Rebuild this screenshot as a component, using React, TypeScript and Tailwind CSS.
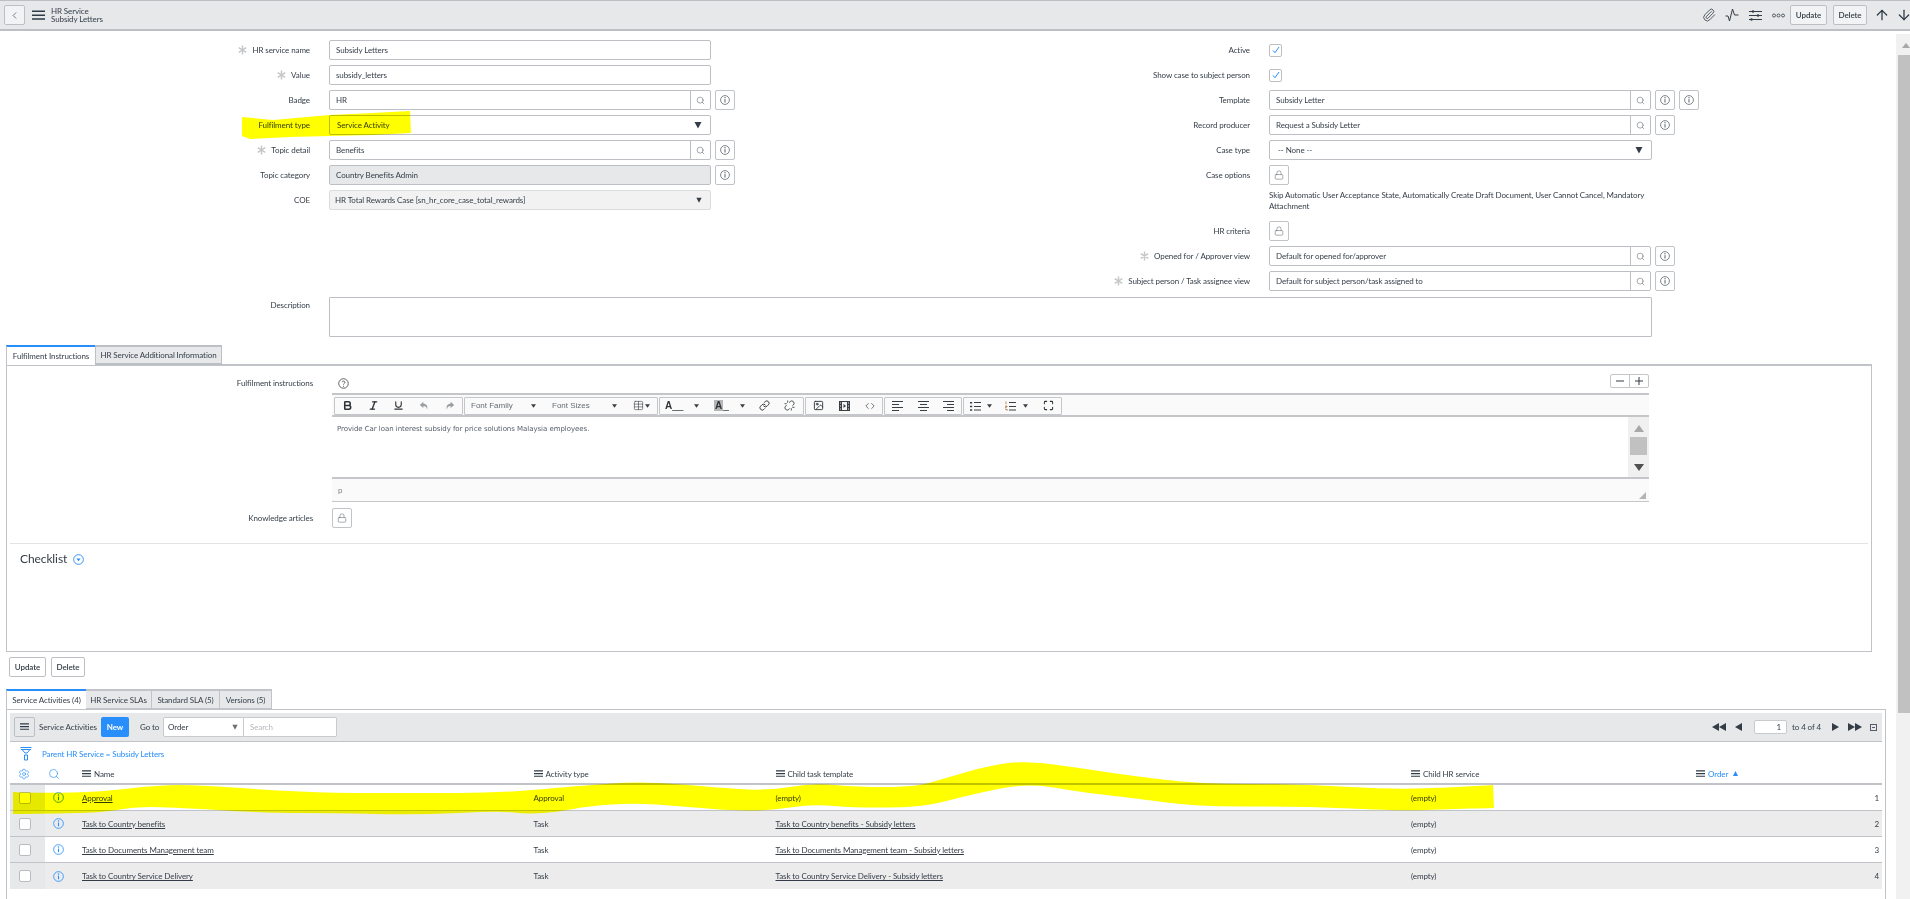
import React from 'react';
import {
  ArrowDown,
  ArrowUp,
  Bold,
  ChevronLeft,
  Code,
  Image,
  Italic,
  Link,
  Lock,
  Maximize,
  Paperclip,
  Search,
  Settings,
  Table,
  Underline,
  Unlink,
} from 'lucide-react';

const Burger = ({ w = 9 }: { w?: number }) => (
  <svg width={w} height={w * 0.8} viewBox="0 0 10 8" className="shrink-0" preserveAspectRatio="none">
    <path d="M0 1h10M0 4h10M0 7h10" stroke="#2e3a45" strokeWidth="1.2" />
  </svg>
);

const Star = () => (
  <svg width="9" height="10" viewBox="0 0 10 10" className="mr-[5px] shrink-0">
    <path d="M5 0v10M0.8 2.4l8.4 5.2M9.2 2.4l-8.4 5.2" stroke="#c4c6c8" strokeWidth="1.6" />
  </svg>
);

const InfoGlyph = ({ size = 10, color = '#555e68' }: { size?: number; color?: string }) => (
  <svg width={size} height={size} viewBox="0 0 12 12" className="shrink-0">
    <circle cx="6" cy="6" r="5.3" fill="none" stroke={color} strokeWidth="0.9" />
    <path d="M6 5v4" stroke={color} strokeWidth="1.2" />
    <circle cx="6" cy="3.2" r="0.8" fill={color} />
  </svg>
);

const Caret = ({ size = 8, color = '#343d47' }: { size?: number; color?: string }) => (
  <svg width={size} height={size} viewBox="0 0 8 8" className="shrink-0">
    <path d="M0.5 1h7L4 7.5z" fill={color} />
  </svg>
);

const TinyCaret = () => (
  <svg width="5" height="4" viewBox="0 0 6 4" className="shrink-0">
    <path d="M0 0h6L3 4z" fill="#3a3f45" />
  </svg>
);

const InfoBtn = () => (
  <button className="flex h-[20px] w-[20px] shrink-0 items-center justify-center rounded-[2px] border border-[#c0c3c7] bg-white">
    <InfoGlyph />
  </button>
);

const LockBtn = () => (
  <button className="flex h-[20px] w-[20px] shrink-0 items-center justify-center rounded-[2px] border border-[#c0c3c7] bg-white">
    <Lock size={10} strokeWidth={1.2} color="#555e68" />
  </button>
);

const Label = ({ text, star, w }: { text: string; star?: boolean; w: string }) => (
  <div className={`flex shrink-0 items-center justify-end ${w}`}>
    {star && <Star />}
    <span>{text}</span>
  </div>
);

const TextInput = ({ value, w, lookup }: { value: string; w: string; lookup?: boolean }) => (
  <div className={`flex h-[20px] shrink-0 items-center rounded-[2px] border border-[#bcc0c4] bg-white ${w}`}>
    <span className="flex-1 pl-[6px]">{value}</span>
    {lookup && (
      <span className="flex h-full w-[20px] items-center justify-center border-l border-[#bcc0c4]">
        <Search size={9} strokeWidth={1.4} color="#555e68" />
      </span>
    )}
  </div>
);

const Row = ({ children }: { children: React.ReactNode }) => (
  <div className="mb-[5px] flex h-[20px] items-center">{children}</div>
);

function LeftColumn() {
  const lbl = 'w-[310px]';
  return (
    <div className="w-[945px] shrink-0">
      <Row>
        <Label text="HR service name" star w={lbl} />
        <div className="ml-[19px] flex gap-[4px]">
          <TextInput value="Subsidy Letters" w="w-[382px]" />
        </div>
      </Row>
      <Row>
        <Label text="Value" star w={lbl} />
        <div className="ml-[19px] flex gap-[4px]">
          <TextInput value="subsidy_letters" w="w-[382px]" />
        </div>
      </Row>
      <Row>
        <Label text="Badge" w={lbl} />
        <div className="ml-[19px] flex gap-[4px]">
          <TextInput value="HR" w="w-[382px]" lookup />
          <InfoBtn />
        </div>
      </Row>
      <Row>
        <Label text="Fulfilment type" w={lbl} />
        <div className="ml-[19px] flex h-[20px] w-[382px] items-center justify-between rounded-[2px] border border-[#bcc0c4] bg-white pl-[7px] pr-[8px]">
          <span>Service Activity</span>
          <Caret />
        </div>
      </Row>
      <Row>
        <Label text="Topic detail" star w={lbl} />
        <div className="ml-[19px] flex gap-[4px]">
          <TextInput value="Benefits" w="w-[382px]" lookup />
          <InfoBtn />
        </div>
      </Row>
      <Row>
        <Label text="Topic category" w={lbl} />
        <div className="ml-[19px] flex gap-[4px]">
          <div className="flex h-[20px] w-[382px] items-center rounded-[2px] border border-[#bcc0c4] bg-[#e6e8ea] pl-[6px]">
            Country Benefits Admin
          </div>
          <InfoBtn />
        </div>
      </Row>
      <Row>
        <Label text="COE" w={lbl} />
        <div className="ml-[19px] flex h-[20px] w-[382px] items-center justify-between rounded-[2px] border border-[#d9dbdd] bg-[#f2f2f2] pl-[5px] pr-[8px]">
          <span>HR Total Rewards Case [sn_hr_core_case_total_rewards]</span>
          <Caret size={6} />
        </div>
      </Row>
    </div>
  );
}

const Check = () => (
  <div className="flex h-[13px] w-[13px] items-center justify-center rounded-[2px] border border-[#bcc0c4] bg-white">
    <svg width="8" height="8" viewBox="0 0 8 8">
      <path d="M1 4.5l2 2.2L7 1" fill="none" stroke="#278efc" strokeWidth="1" />
    </svg>
  </div>
);

function RightColumn() {
  const lbl = 'w-[305px]';
  return (
    <div className="flex-1">
      <Row>
        <Label text="Active" w={lbl} />
        <div className="ml-[19px]">
          <Check />
        </div>
      </Row>
      <Row>
        <Label text="Show case to subject person" w={lbl} />
        <div className="ml-[19px]">
          <Check />
        </div>
      </Row>
      <Row>
        <Label text="Template" w={lbl} />
        <div className="ml-[19px] flex gap-[4px]">
          <TextInput value="Subsidy Letter" w="w-[382px]" lookup />
          <InfoBtn />
          <InfoBtn />
        </div>
      </Row>
      <Row>
        <Label text="Record producer" w={lbl} />
        <div className="ml-[19px] flex gap-[4px]">
          <TextInput value="Request a Subsidy Letter" w="w-[382px]" lookup />
          <InfoBtn />
        </div>
      </Row>
      <Row>
        <Label text="Case type" w={lbl} />
        <div className="ml-[19px] flex h-[20px] w-[383px] items-center justify-between rounded-[2px] border border-[#bcc0c4] bg-white pl-[8px] pr-[8px]">
          <span>-- None --</span>
          <Caret />
        </div>
      </Row>
      <div className="flex h-[20px] items-center">
        <Label text="Case options" w={lbl} />
        <div className="ml-[19px]">
          <LockBtn />
        </div>
      </div>
      <div className="mb-[9px] ml-[324px] mt-[5px] w-[385px] leading-[11px]">
        Skip Automatic User Acceptance State, Automatically Create Draft Document, User Cannot Cancel, Mandatory Attachment
      </div>
      <Row>
        <Label text="HR criteria" w={lbl} />
        <div className="ml-[19px]">
          <LockBtn />
        </div>
      </Row>
      <Row>
        <Label text="Opened for / Approver view" star w={lbl} />
        <div className="ml-[19px] flex gap-[4px]">
          <TextInput value="Default for opened for/approver" w="w-[382px]" lookup />
          <InfoBtn />
        </div>
      </Row>
      <div className="flex h-[20px] items-center">
        <Label text="Subject person / Task assignee view" star w={lbl} />
        <div className="ml-[19px] flex gap-[4px]">
          <TextInput value="Default for subject person/task assigned to" w="w-[382px]" lookup />
          <InfoBtn />
        </div>
      </div>
    </div>
  );
}

const Group = ({ w, children }: { w: string; children: React.ReactNode }) => (
  <div className={`flex h-[18px] shrink-0 items-center rounded-[1px] border border-[#c4c6ca] ${w}`}>{children}</div>
);

const ToolBtn = ({ children, w = 'w-[25.5px]' }: { children: React.ReactNode; w?: string }) => (
  <span className={`flex shrink-0 items-center justify-center ${w}`}>{children}</span>
);

const ReplyArrow = ({ flip }: { flip?: boolean }) => (
  <svg width="10" height="10" viewBox="0 0 10 10" className={flip ? '-scale-x-100' : ''}>
    <path d="M4.4 0.8L0.8 3.9l3.6 3V5c2 0 3.2.8 3.7 3.5C9 5 7.500 2.800 4.400 2.800z" fill="#9a9ea2" />
  </svg>
);

const Film = () => (
  <svg width="11" height="10" viewBox="0 0 11 10">
    <path d="M0 0h11v10H0z" fill="#3a3f45" />
    <path d="M3 1h5v8H3z" fill="#f4f4f4" />
    <path d="M4.500 3l2.500 2-2.500 2z" fill="#3a3f45" />
    <path d="M1 2h1M1 5h1M1 8h1M9 2h1M9 5h1M9 8h1" stroke="#fff" strokeWidth="0.9" />
  </svg>
);

const AlignIcon = ({ align }: { align: 'left' | 'center' | 'right' }) => {
  const x = align === 'left' ? 0 : align === 'center' ? 2 : 4;
  return (
    <svg width="11" height="10" viewBox="0 0 11 10">
      <path d={`M0 0.500h11M${x} 3.500h7M0 6.500h11M${x} 9.500h7`} stroke="#3a3f45" strokeWidth="1" />
    </svg>
  );
};

const ListIcon = ({ num }: { num?: boolean }) => (
  <svg width="11" height="10" viewBox="0 0 11 10">
    <path d="M4 1.500h7M4 5.500h7M4 9h7" stroke="#3a3f45" strokeWidth="1" />
    {num ? (
      <path d="M1 0.500v2.500M0.200 5h1.800v1H0.400v1.500M0.400 8.500h1.800v1.200" stroke="#a36d2e" strokeWidth="0.8" fill="none" />
    ) : (
      <path d="M0 1h2.200v1.400H0zM0 4.800h2.200v1.400H0zM0 8.300h2.200v1.400H0z" fill="#3a3f45" />
    )}
  </svg>
);

function EditorToolbar() {
  const ic = '#2e3338';
  return (
    <div className="flex h-[22px] items-center gap-[1px] border-b-2 border-[#c4c6ca] bg-[#fafafa] pl-[2px] pt-[1px] font-['Liberation_Sans',sans-serif] text-[8px] tracking-normal text-[#666c74]">
      <Group w="w-[129px]">
        <ToolBtn>
          <Bold size={11} strokeWidth={3.4} color={ic} />
        </ToolBtn>
        <ToolBtn>
          <Italic size={11} strokeWidth={3} color={ic} />
        </ToolBtn>
        <ToolBtn>
          <Underline size={11} strokeWidth={2.4} color={ic} />
        </ToolBtn>
        <ToolBtn>
          <ReplyArrow />
        </ToolBtn>
        <ToolBtn>
          <ReplyArrow flip />
        </ToolBtn>
      </Group>
      <Group w="w-[194px]">
        <span className="w-[66px] pl-[6px]">Font Family</span>
        <TinyCaret />
        <span className="w-[16px]" />
        <span className="w-[60px]">Font Sizes</span>
        <TinyCaret />
        <span className="w-[16px]" />
        <Table size={11} strokeWidth={1.2} color={ic} />
        <span className="ml-[1px]">
          <TinyCaret />
        </span>
      </Group>
      <Group w="w-[145px]">
        <span className="ml-[5px] w-[25px] text-[10px] font-bold text-[#2e3338]">
          A<span className="font-normal">__</span>
        </span>
        <span className="ml-[4px]">
          <TinyCaret />
        </span>
        <span className="ml-[15px] w-[26px] text-[10px] font-bold text-[#2e3338]">
          <span className="bg-[#b4b6b8] px-[1px]">A</span>
          <span className="font-normal">_</span>
        </span>
        <TinyCaret />
        <span className="ml-[14px]">
          <Link size={11} strokeWidth={2} color={ic} />
        </span>
        <span className="ml-[14px]">
          <Unlink size={11} strokeWidth={1.8} color={ic} />
        </span>
      </Group>
      <Group w="w-[78px]">
        <ToolBtn>
          <Image size={11} strokeWidth={2} color={ic} />
        </ToolBtn>
        <ToolBtn>
          <Film />
        </ToolBtn>
        <ToolBtn>
          <Code size={10} strokeWidth={1.6} color={ic} />
        </ToolBtn>
      </Group>
      <Group w="w-[78px]">
        <ToolBtn>
          <AlignIcon align="left" />
        </ToolBtn>
        <ToolBtn>
          <AlignIcon align="center" />
        </ToolBtn>
        <ToolBtn>
          <AlignIcon align="right" />
        </ToolBtn>
      </Group>
      <Group w="w-[99px]">
        <span className="ml-[6px]">
          <ListIcon />
        </span>
        <span className="ml-[6px]">
          <TinyCaret />
        </span>
        <span className="ml-[13px]">
          <ListIcon num />
        </span>
        <span className="ml-[7px]">
          <TinyCaret />
        </span>
        <span className="ml-[15px]">
          <Maximize size={11} strokeWidth={2.2} color={ic} />
        </span>
      </Group>
    </div>
  );
}

function FormTabs() {
  return (
    <>
      <div className="ml-[6px] flex h-[20px]">
        <div className="flex w-[89px] items-center justify-center border-l border-t-[2px] border-[#278efc] border-l-[#c0c3c7] bg-white">
          Fulfilment Instructions
        </div>
        <div className="flex w-[127px] items-center justify-center border-x border-b-2 border-t-2 border-[#bcc0c4] bg-[#e6e8ea]">
          HR Service Additional Information
        </div>
      </div>
      <div className="-mt-[1px] ml-[6px] h-[288px] w-[1866px] border border-t-2 border-[#c0c3c7]">
        <div className="flex pt-[8px]">
          <div className="w-[306px] shrink-0 pt-[3px] text-right leading-[12px]">Fulfilment instructions</div>
          <div className="ml-[19px] w-[1317px]">
            <div className="flex h-[14px] items-center justify-between">
              <svg width="11" height="11" viewBox="0 0 12 12" className="ml-[6px] mt-[4px]">
                <circle cx="6" cy="6" r="5.2" fill="none" stroke="#444" strokeWidth="0.9" />
                <path d="M4.400 4.600C4.600 3 7.600 3 7.600 4.700c0 1.200-1.600 1.100-1.600 2.500" fill="none" stroke="#444" strokeWidth="0.9" />
                <circle cx="6" cy="9" r="0.6" fill="#444" />
              </svg>
              <div className="flex h-[14px] w-[39px] rounded-[2px] border border-[#c4c6ca] text-[#343d47]">
                <span className="flex flex-1 items-center justify-center border-r border-[#c4c6ca]">
                  <svg width="8" height="8" viewBox="0 0 8 8">
                    <path d="M0 4h8" stroke="#343d47" strokeWidth="1" />
                  </svg>
                </span>
                <span className="flex flex-1 items-center justify-center">
                  <svg width="8" height="8" viewBox="0 0 8 8">
                    <path d="M0 4h8M4 0v8" stroke="#343d47" strokeWidth="1" />
                  </svg>
                </span>
              </div>
            </div>
            <div className="mt-[5px] border-x-0 border-b border-t-2 border-[#c4c6ca]">
              <EditorToolbar />
              <div className="flex h-[62px] border-b-2 border-[#c4c6ca]">
                <div className="flex-1 pl-[5px] pt-[5px] font-['DejaVu_Sans',sans-serif] text-[7px] leading-[14px] tracking-[-0.05px] text-[#555e68]">
                  Provide Car loan interest subsidy for price solutions Malaysia employees.
                </div>
                <div className="flex w-[21px] flex-col items-center bg-[#f0f0f0] pt-[8px]">
                  <svg width="10" height="7" viewBox="0 0 10 7">
                    <path d="M5 0l5 7H0z" fill="#a8a8a8" />
                  </svg>
                  <div className="mt-[5px] h-[18px] w-[17px] bg-[#c1c1c1]" />
                  <svg width="10" height="7" viewBox="0 0 10 7" className="mt-[9px]">
                    <path d="M0 0h10L5 7z" fill="#505050" />
                  </svg>
                </div>
              </div>
              <div className="flex h-[22px] items-center justify-between bg-[#fafafa] pl-[6px] pr-[3px] text-[#808488]">
                <span>p</span>
                <svg width="7" height="7" viewBox="0 0 7 7" className="mt-[10px]">
                  <path d="M7 0v7H0z" fill="#b4b4b4" />
                </svg>
              </div>
            </div>
          </div>
        </div>
        <div className="mt-[6px] flex h-[20px] items-center">
          <div className="w-[306px] shrink-0 text-right">Knowledge articles</div>
          <div className="ml-[19px]">
            <LockBtn />
          </div>
        </div>
        <div className="mx-[3px] mt-[15px] border-t border-[#e2e3e5]" />
        <div className="ml-[13px] mt-[8px] flex items-center">
          <span className="text-[12px] leading-[14px]">Checklist</span>
          <svg width="11" height="11" viewBox="0 0 12 12" className="ml-[6px]">
            <circle cx="6" cy="6" r="5.300" fill="none" stroke="#278efc" strokeWidth="1" />
            <path d="M3.800 5h4.400L6 8z" fill="#278efc" />
          </svg>
        </div>
      </div>
    </>
  );
}

const PagerTri = ({ dir }: { dir: 'l' | 'r' }) => (
  <svg width="7" height="8" viewBox="0 0 7 8">
    <path d={dir === 'l' ? 'M7 0v8L0 4z' : 'M0 0v8l7-4z'} fill="#343d47" />
  </svg>
);

function ListToolbar() {
  return (
    <div className="flex h-[29px] items-center border-b border-[#c0c3c7] bg-[#e6e8ea] pl-[4px]">
      <button className="flex h-[20px] w-[21px] items-center justify-center rounded-[2px] border border-[#bcc0c4]">
        <Burger />
      </button>
      <span className="ml-[4px] w-[62px]">Service Activities</span>
      <button className="flex h-[20px] w-[28px] items-center justify-center rounded-[2px] bg-[#278efc] font-bold text-white">
        New
      </button>
      <span className="ml-[11px] w-[23px]">Go to</span>
      <div className="flex h-[20px] w-[81px] items-center justify-between rounded-l-[2px] border border-[#c8cacc] bg-white pl-[4px] pr-[5px]">
        <span>Order</span>
        <Caret size={6} color="#6a6f75" />
      </div>
      <div className="flex h-[20px] w-[93px] items-center rounded-r-[2px] border border-l-0 border-[#c8cacc] bg-white pl-[6px] text-[#b4b8bc]">
        Search
      </div>
      <div className="ml-auto flex items-center pr-[5px]">
        <PagerTri dir="l" />
        <PagerTri dir="l" />
        <span className="ml-[9px]">
          <PagerTri dir="l" />
        </span>
        <div className="ml-[12px] flex h-[14px] w-[33px] items-center justify-end rounded-[2px] border border-[#c8cacc] bg-white pr-[5px]">
          1
        </div>
        <span className="ml-[5px] w-[40px]">to 4 of 4</span>
        <PagerTri dir="r" />
        <span className="ml-[9px] flex">
          <PagerTri dir="r" />
          <PagerTri dir="r" />
        </span>
        <span className="ml-[8px] flex h-[7px] w-[7px] items-center justify-center border border-[#555e68]">
          <span className="h-[1px] w-[3px] bg-[#555e68]" />
        </span>
      </div>
    </div>
  );
}

const rows = [
  { name: 'Approval', type: 'Approval', tmpl: '', order: 1 },
  { name: 'Task to Country benefits', type: 'Task', tmpl: 'Task to Country benefits - Subsidy letters', order: 2 },
  { name: 'Task to Documents Management team', type: 'Task', tmpl: 'Task to Documents Management team - Subsidy letters', order: 3 },
  { name: 'Task to Country Service Delivery', type: 'Task', tmpl: 'Task to Country Service Delivery - Subsidy letters', order: 4 },
];

const ColHead = ({ text, w, blue }: { text: string; w: string; blue?: boolean }) => (
  <div className={`flex items-center gap-[3px] ${w}`}>
    <Burger />
    <span className={blue ? 'text-[#278efc]' : ''}>{text}</span>
    {blue && (
      <svg width="5" height="5" viewBox="0 0 6 6" className="ml-[2px]">
        <path d="M3 0l3 6H0z" fill="#278efc" />
      </svg>
    )}
  </div>
);

function RelatedList() {
  return (
    <div className="ml-[6px] mr-[10px] flex min-h-0 flex-1 flex-col border-x border-t border-[#c0c3c7] pl-[3px] pr-[3px] pt-[3px]">
      <ListToolbar />
      <div className="flex h-[23px] items-center pl-[10px]">
        <svg width="12" height="14" viewBox="0 0 12 14" className="mt-[1px]">
          <path d="M0.500 0.500h11M1 2.500h10M2 2.500l3 3.500h2l3-3.500M4.500 8h3v5h-3z" fill="none" stroke="#278efc" strokeWidth="1" />
        </svg>
        <span className="ml-[10px] text-[#278efc]">Parent HR Service = Subsidy Letters</span>
      </div>
      <div className="flex h-[20px] items-center border-b-2 border-[#c0c3c7] pb-[1px]">
        <span className="flex w-[36px] justify-center pr-[9px]">
          <Settings size={12} strokeWidth={1.3} color="#278efc" />
        </span>
        <span className="flex w-[36px] justify-center pr-[20px]">
          <Search size={12} strokeWidth={1.3} color="#278efc" />
        </span>
        <ColHead text="Name" w="w-[451.5px]" />
        <ColHead text="Activity type" w="w-[242px]" />
        <ColHead text="Child task template" w="w-[635.5px]" />
        <ColHead text="Child HR service" w="w-[285px]" />
        <ColHead text="Order" w="flex-1" blue />
      </div>
      {rows.map((r) => (
        <div
          key={r.order}
          className={`flex h-[26px] items-center ${r.order < 4 ? 'border-b border-[#c0c3c7]' : ''} ${
            r.order % 2 === 0 ? 'bg-[#ececec]' : 'bg-white'
          }`}
        >
          <span className="flex h-full w-[35px] items-center justify-center bg-[#e6e8ea] pr-[5px]">
            <span className="h-[12px] w-[12px] rounded-[2px] border border-[#b8bcc0] bg-white" />
          </span>
          <span className="flex w-[37px] justify-center pr-[11px]">
            <InfoGlyph size={11} color="#278efc" />
          </span>
          <span className="w-[451.5px] underline underline-offset-[1px]">{r.name}</span>
          <span className="w-[242px]">{r.type}</span>
          <span className={`w-[635.5px] ${r.tmpl ? 'underline underline-offset-[1px]' : ''}`}>
            {r.tmpl || '(empty)'}
          </span>
          <span className="w-[285px]">(empty)</span>
          <span className="flex-1 pr-[3px] text-right">{r.order}</span>
        </div>
      ))}
    </div>
  );
}

// rounds off the hand-traced marker outline; a doubled point stays a hard corner
function smooth(pts: number[][]) {
  let d = '';
  pts.forEach((p, i) => {
    const n = pts[(i + 1) % pts.length];
    const mx = (p[0] + n[0]) / 2;
    const my = (p[1] + n[1]) / 2;
    d += i === 0 ? `M${mx} ${my}` : `Q${p[0]} ${p[1]} ${mx} ${my}`;
  });
  return `${d}Z`;
}

const stroke2 = [
  [13, 792], [13, 792], [45, 793], [100, 792], [158, 785], [200, 785], [267, 790], [333, 793], [417, 793], [500, 793], [589, 785],
  [634, 782], [679, 784], [710, 787], [768, 791], [812, 783], [857, 787], [915, 787], [946, 778], [991, 765], [1027, 761],
  [1080, 768], [1125, 775], [1200, 784], [1300, 784], [1400, 790], [1493, 785], [1493, 785], [1494, 808], [1494, 808], [1450, 809], [1400, 811], [1300, 806],
  [1200, 807], [1125, 797], [1080, 792], [1027, 783], [969, 795], [924, 807], [857, 808], [812, 804], [768, 811], [723, 810],
  [679, 806], [634, 803], [589, 806], [558, 812], [527, 814], [500, 811], [417, 815], [333, 813], [267, 813], [167, 807],
  [133, 807], [100, 813], [13, 814], [13, 814],
];

export default function App() {
  return (
    <div className="relative flex h-screen w-full flex-col overflow-hidden bg-white font-[Lato,sans-serif] text-[8px] leading-[10px] tracking-[-0.1px] text-[#343d47]">
      {/* Header */}
      <div className="flex h-[31px] shrink-0 items-center border-b-2 border-t border-[#bcc0c4] bg-[#e6e8ea]">
        <button className="ml-[4px] flex h-[20px] w-[21px] items-center justify-center rounded-[2px] border border-[#bcc0c4] bg-[#f2f3f4]">
          <ChevronLeft size={11} strokeWidth={1.4} color="#2e3a45" />
        </button>
        <div className="ml-[7px]">
          <Burger w={13} />
        </div>
        <div className="ml-[6px] leading-[8px]">
          <div>HR Service</div>
          <div>Subsidy Letters</div>
        </div>
        <div className="ml-auto flex items-center">
          <Paperclip size={14} strokeWidth={1.4} color="#343d47" className="mr-[9px]" />
          <svg width="14" height="14" viewBox="0 0 14 14" className="mr-[10px]">
            <path d="M0.500 8h2.500l1.500 5 3-12 2 6h4" fill="none" stroke="#343d47" strokeWidth="1" />
          </svg>
          <svg width="13" height="13" viewBox="0 0 13 13" className="mr-[10px]">
            <path d="M0 2.500h13M0 6.500h13M0 10.500h13" stroke="#343d47" strokeWidth="1" />
            <circle cx="4" cy="2.500" r="1.200" fill="#343d47" />
            <circle cx="9" cy="6.500" r="1.200" fill="#343d47" />
            <circle cx="2.500" cy="10.500" r="1.200" fill="#343d47" />
          </svg>
          <svg width="13" height="5" viewBox="0 0 13 5" className="mr-[5px]">
            <circle cx="2" cy="2.500" r="1.500" fill="none" stroke="#343d47" strokeWidth="0.8" />
            <circle cx="6.500" cy="2.500" r="1.500" fill="none" stroke="#343d47" strokeWidth="0.8" />
            <circle cx="11" cy="2.500" r="1.500" fill="none" stroke="#343d47" strokeWidth="0.8" />
          </svg>
          <button className="flex h-[20px] w-[37px] items-center justify-center rounded-[2px] border border-[#bcc0c4] bg-[#f2f3f4] font-semibold">
            Update
          </button>
          <button className="ml-[6px] flex h-[20px] w-[34px] items-center justify-center rounded-[2px] border border-[#bcc0c4] bg-[#f2f3f4] font-semibold">
            Delete
          </button>
          <ArrowUp size={16} strokeWidth={1.9} color="#2e3a45" className="ml-[7px]" />
          <ArrowDown size={16} strokeWidth={1.9} color="#2e3a45" className="ml-[6px] mr-[-2px]" />
        </div>
      </div>

      <div className="flex min-h-0 flex-1">
        <div className="flex min-w-0 flex-1 flex-col">
          <div className="flex pt-[9px]">
            <LeftColumn />
            <RightColumn />
          </div>
          <div className="mt-[6px] flex h-[40px] shrink-0">
            <div className="w-[310px] pt-[3px] text-right">Description</div>
            <div className="ml-[19px] w-[1323px] rounded-[1px] border border-[#bcc0c4]" />
          </div>
          <div className="mt-[8px] shrink-0">
            <FormTabs />
          </div>
          <div className="ml-[9px] mt-[5px] flex h-[20px] shrink-0 gap-[5px]">
            <button className="w-[37px] rounded-[2px] border border-[#bcc0c4] bg-white font-semibold">Update</button>
            <button className="w-[34px] rounded-[2px] border border-[#bcc0c4] bg-white font-semibold">Delete</button>
          </div>
          <div className="ml-[6px] mt-[12px] flex h-[20px] shrink-0">
            <div className="flex w-[80px] items-center justify-center border-l border-t-2 border-[#278efc] border-l-[#c0c3c7]">
              Service Activities (4)
            </div>
            {['HR Service SLAs', 'Standard SLA (5)', 'Versions (5)'].map((t, i) => (
              <div
                key={t}
                className={`flex items-center justify-center border-b border-r border-t-2 border-[#c0c3c7] bg-[#e6e8ea] ${
                  i === 0 ? 'w-[66px]' : i === 1 ? 'w-[68px]' : 'w-[52px]'
                }`}
              >
                {t}
              </div>
            ))}
          </div>
          <RelatedList />
        </div>

        {/* Page scrollbar */}
        <div className="mt-[3px] flex w-[14px] shrink-0 flex-col bg-[#f1f1f1]">
          <svg width="8" height="5" viewBox="0 0 8 5" className="ml-[6px] mt-[9px]">
            <path d="M4 0l4 5H0z" fill="#a8a8a8" />
          </svg>
          <div className="ml-[2px] mt-[7px] h-[658px] w-[12px] bg-[#c1c1c1]" />
        </div>
      </div>

      {/* Marker highlights drawn over the screenshot */}
      <svg
        className="pointer-events-none absolute inset-0 mix-blend-multiply"
        width="1910"
        height="899"
        viewBox="0 0 1910 899"
      >
        <path
          d="M242 117 L273 120 L330 115 L373 113 L410 111 L411 133 L373 135 L330 136 L290 137 L250 139 L242 136 Z"
          fill="#ffff00"
        />
        <path d={smooth(stroke2)} fill="#ffff00" />
      </svg>
    </div>
  );
}
